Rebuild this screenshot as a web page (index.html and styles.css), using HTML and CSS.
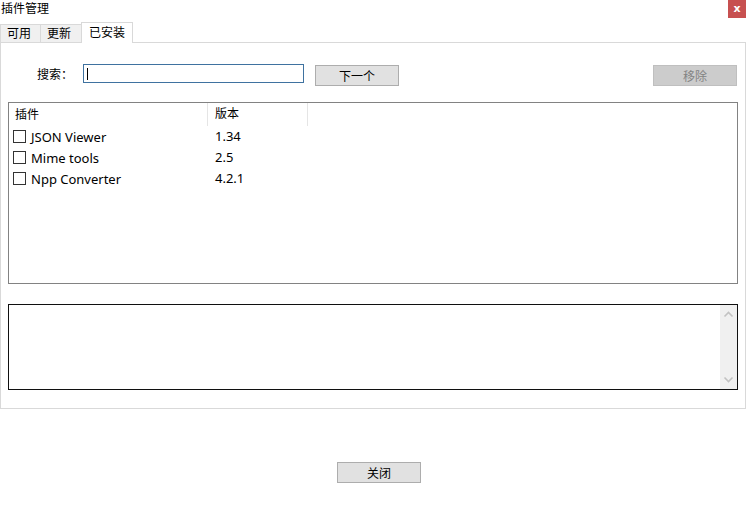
FILE: index.html
```html
<!DOCTYPE html>
<html lang="zh-CN">
<head>
    <meta charset="UTF-8">
    <title>插件管理</title>
    <link rel="stylesheet" href="styles.css">
</head>
<body>

<div class="titlebar">
    <span class="title">插件管理</span>
    <button class="close-x">x</button>
</div>

<div class="tabs">
    <div class="tab">可用</div>
    <div class="tab">更新</div>
    <div class="tab tab-active">已安装</div>
</div>

<div class="panel">
    <div class="search-row">
        <label class="search-label" for="search">搜索：</label>
        <div class="search-input" id="search"><span class="caret"></span></div>
        <button class="btn next-button">下一个</button>
        <button class="btn remove-button" disabled>移除</button>
    </div>

    <div class="plugin-list">
        <div class="list-header">
            <div class="col col-name">插件</div>
            <div class="col col-version">版本</div>
        </div>
        <div class="list-row">
            <div class="col col-name"><span class="check"></span>JSON Viewer</div>
            <div class="col col-version">1.34</div>
        </div>
        <div class="list-row">
            <div class="col col-name"><span class="check"></span>Mime tools</div>
            <div class="col col-version">2.5</div>
        </div>
        <div class="list-row">
            <div class="col col-name"><span class="check"></span>Npp Converter</div>
            <div class="col col-version">4.2.1</div>
        </div>
    </div>

    <div class="description">
        <div class="desc-text"></div>
        <div class="scrollbar">
            <svg width="17" height="17" viewBox="0 0 17 17"><path d="M4.5 10.5 L8.5 6.5 L12.5 10.5" fill="none" stroke="#c2c2c2" stroke-width="1.6"/></svg>
            <svg width="17" height="17" viewBox="0 0 17 17"><path d="M4.5 6.5 L8.5 10.5 L12.5 6.5" fill="none" stroke="#c2c2c2" stroke-width="1.6"/></svg>
        </div>
    </div>
</div>

<div class="footer">
    <button class="btn close-button">关闭</button>
</div>

</body>
</html>
```

FILE: styles.css
```css
* {
    box-sizing: border-box;
}

body {
    margin: 0;
    background: #ffffff;
    font-family: "Noto Sans", "Noto Sans CJK SC", sans-serif;
    font-size: 12px;
    color: #000;
}

/* Window title */
.titlebar {
    height: 18px;
    display: flex;
    justify-content: space-between;
    align-items: flex-start;
}

.title {
    line-height: 17px;
    padding-left: 1px;
}

.close-x {
    width: 18px;
    height: 18px;
    border: none;
    padding: 0;
    background: #c75050;
    color: #fff;
    font-family: "DejaVu Sans", sans-serif;
    font-weight: bold;
    font-size: 11px;
    line-height: 16px;
}

/* Tabs */
.tabs {
    margin-top: 4px;
    display: flex;
    align-items: flex-end;
    height: 20px;
    position: relative;
    z-index: 1;
}

.tab {
    height: 18px;
    width: 41px;
    padding: 0 6px;
    background: #f0f0f0;
    border: 1px solid #d9d9d9;
    border-bottom: none;
    line-height: 17px;
}

.tab + .tab {
    border-left: none;
}

.tab-active {
    height: 21px;
    width: 52px;
    margin-bottom: -1px;
    margin-left: -1px;
    padding-left: 7px;
    background: #fff;
    border-left: 1px solid #d9d9d9 !important;
    line-height: 19px;
}

/* Tab page */
.panel {
    width: 746px;
    height: 367px;
    border: 1px solid #d9d9d9;
    padding: 21px 7px 0 7px;
}

.search-row {
    display: flex;
    align-items: flex-start;
    height: 22px;
}

.search-label {
    margin-left: 29px;
    width: 46px;
    line-height: 19px;
    padding-top: 1px;
}

.search-input {
    width: 221px;
    height: 19px;
    border: 1px solid #3f72a0;
    padding: 3px 0 0 3px;
}

.caret {
    display: block;
    width: 1px;
    height: 12px;
    background: #000;
}

.btn {
    width: 84px;
    height: 21px;
    background: #e1e1e1;
    border: 1px solid #adadad;
    font-family: "Noto Sans CJK SC", sans-serif;
    font-size: 12px;
    padding: 0;
    color: #000;
}

.next-button {
    margin-top: 1px;
    margin-left: 11px;
}

.remove-button {
    margin-top: 1px;
    margin-left: auto;
    margin-right: 1px;
    background: #cccccc;
    border-color: #bfbfbf;
    color: #838383;
}

/* Plugin list */
.plugin-list {
    margin-top: 16px;
    height: 182px;
    border: 1px solid #828282;
}

.list-header {
    display: flex;
    height: 23px;
    line-height: 22px;
}

.list-header .col {
    border-right: 1px solid #e5e5e5;
}

.list-row {
    display: flex;
    height: 21px;
    line-height: 20px;
    font-size: 13px;
}

.col-name {
    width: 199px;
    padding-left: 6px;
    display: flex;
    align-items: center;
}

.col-version {
    width: 100px;
    padding-left: 7px;
}

.list-row .col-name {
    padding-left: 4px;
}

.check {
    width: 13px;
    height: 13px;
    border: 1px solid #333;
    margin-right: 5px;
    flex: none;
}

/* Description box */
.description {
    margin-top: 20px;
    height: 86px;
    border: 1px solid #101010;
    display: flex;
}

.desc-text {
    flex: 1;
}

.scrollbar {
    width: 17px;
    background: #f0f0f0;
    display: flex;
    flex-direction: column;
    justify-content: space-between;
    padding: 1px 0;
}

.scrollbar svg {
    display: block;
}

/* Bottom */
.footer {
    padding: 53px 0 0 337px;
}
```
